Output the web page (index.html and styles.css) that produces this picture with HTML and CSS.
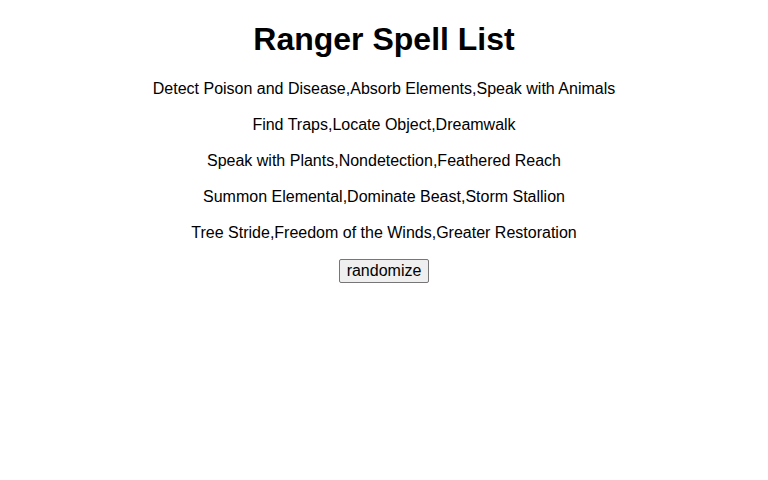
FILE: index.html
```html
<!DOCTYPE html>
<html>
<head>
<meta charset="utf-8">
<link rel="stylesheet" href="styles.css">
</head>
<body>
<div class="page">
  <h1 class="title">Ranger Spell List</h1>
  <p class="spells">Detect Poison and Disease,Absorb Elements,Speak with Animals</p>
  <p class="spells">Find Traps,Locate Object,Dreamwalk</p>
  <p class="spells">Speak with Plants,Nondetection,Feathered Reach</p>
  <p class="spells">Summon Elemental,Dominate Beast,Storm Stallion</p>
  <p class="spells">Tree Stride,Freedom of the Winds,Greater Restoration</p>
  <button class="btn">randomize</button>
</div>
</body>
</html>
```

FILE: styles.css
```css
html, body {
  background: #fff;
}
body {
  margin: 0;
  padding: 0 8px;
  font-family: "Liberation Sans", Arial, sans-serif;
  color: #000;
}
.page {
  text-align: center;
  padding-top: 21px;
}
.title {
  font-size: 32px;
  font-weight: bold;
  margin: 0 0 21px;
}
.spells {
  font-size: 16px;
  line-height: 20px;
  margin: 16px 0;
}
.btn {
  font-family: "Liberation Sans", Arial, sans-serif;
  font-size: 16px;
  color: #000;
  background: #efefef;
  border: 1px solid #767676;
  border-radius: 2px;
  padding: 1px 6px;
  height: 24px;
  line-height: 18px;
  width: 90px;
}
```
